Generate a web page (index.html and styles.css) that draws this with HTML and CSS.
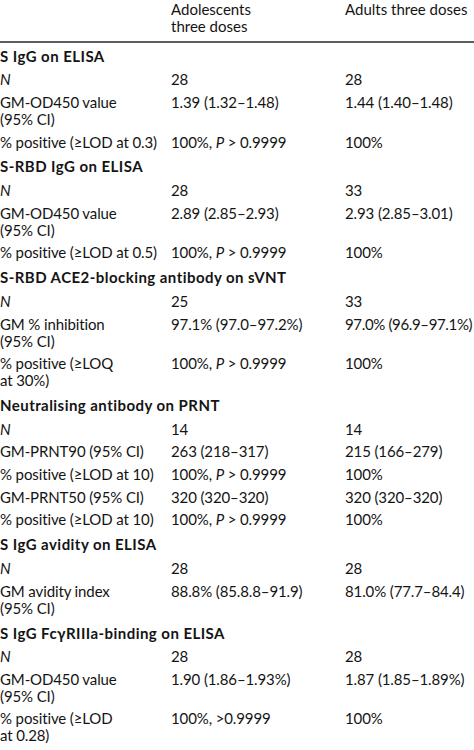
FILE: index.html
```html
<!DOCTYPE html>
<html>
<head>
<meta charset="utf-8">
<link rel="stylesheet" href="styles.css">
</head>
<body>
<div class="table">
  <div class="row head">
    <div class="cell"></div>
    <div class="cell">Adolescents<br>three doses</div>
    <div class="cell">Adults three doses</div>
  </div>

  <div class="sect">S IgG on ELISA</div>
  <div class="row"><div class="cell"><i>N</i></div><div class="cell">28</div><div class="cell">28</div></div>
  <div class="row"><div class="cell">GM-OD450 value<br>(95% CI)</div><div class="cell">1.39 (1.32–1.48)</div><div class="cell">1.44 (1.40–1.48)</div></div>
  <div class="row"><div class="cell">% positive (≥LOD at 0.3)</div><div class="cell">100%, <i>P</i> &gt; 0.9999</div><div class="cell">100%</div></div>

  <div class="sect">S-RBD IgG on ELISA</div>
  <div class="row"><div class="cell"><i>N</i></div><div class="cell">28</div><div class="cell">33</div></div>
  <div class="row"><div class="cell">GM-OD450 value<br>(95% CI)</div><div class="cell">2.89 (2.85–2.93)</div><div class="cell">2.93 (2.85–3.01)</div></div>
  <div class="row"><div class="cell">% positive (≥LOD at 0.5)</div><div class="cell">100%, <i>P</i> &gt; 0.9999</div><div class="cell">100%</div></div>

  <div class="sect">S-RBD ACE2-blocking antibody on sVNT</div>
  <div class="row"><div class="cell"><i>N</i></div><div class="cell">25</div><div class="cell">33</div></div>
  <div class="row"><div class="cell">GM % inhibition<br>(95% CI)</div><div class="cell">97.1% (97.0–97.2%)</div><div class="cell tight">97.0% (96.9–97.1%)</div></div>
  <div class="row"><div class="cell">% positive (≥LOQ<br>at 30%)</div><div class="cell">100%, <i>P</i> &gt; 0.9999</div><div class="cell">100%</div></div>

  <div class="sect">Neutralising antibody on PRNT</div>
  <div class="row"><div class="cell"><i>N</i></div><div class="cell">14</div><div class="cell">14</div></div>
  <div class="row"><div class="cell">GM-PRNT90 (95% CI)</div><div class="cell">263 (218–317)</div><div class="cell">215 (166–279)</div></div>
  <div class="row"><div class="cell">% positive (≥LOD at 10)</div><div class="cell">100%, <i>P</i> &gt; 0.9999</div><div class="cell">100%</div></div>
  <div class="row"><div class="cell">GM-PRNT50 (95% CI)</div><div class="cell">320 (320–320)</div><div class="cell">320 (320–320)</div></div>
  <div class="row"><div class="cell">% positive (≥LOD at 10)</div><div class="cell">100%, <i>P</i> &gt; 0.9999</div><div class="cell">100%</div></div>

  <div class="sect">S IgG avidity on ELISA</div>
  <div class="row"><div class="cell"><i>N</i></div><div class="cell">28</div><div class="cell">28</div></div>
  <div class="row"><div class="cell">GM avidity index<br>(95% CI)</div><div class="cell">88.8% (85.8.8–91.9)</div><div class="cell">81.0% (77.7–84.4)</div></div>

  <div class="sect">S IgG FcγRIIIa-binding on ELISA</div>
  <div class="row"><div class="cell"><i>N</i></div><div class="cell">28</div><div class="cell">28</div></div>
  <div class="row"><div class="cell">GM-OD450 value<br>(95% CI)</div><div class="cell">1.90 (1.86–1.93%)</div><div class="cell">1.87 (1.85–1.89%)</div></div>
  <div class="row"><div class="cell">% positive (≥LOD<br>at 0.28)</div><div class="cell">100%, &gt;0.9999</div><div class="cell">100%</div></div>
</div>
</body>
</html>
```

FILE: styles.css
```css
html, body {
  margin: 0;
  padding: 0;
  background: #ffffff;
}
body {
  font-family: "Lato", "Open Sans", sans-serif;
  font-size: 15px;
  line-height: 17px;
  color: #141414;
  overflow: hidden;
}
.table {
  display: flex;
  flex-direction: column;
  width: 474px;
}
.row {
  display: grid;
  grid-template-columns: 171px 174px 1fr;
  padding: 2.85px 0;
  letter-spacing: -0.12px;
}
.cell {
  white-space: nowrap;
}
.cell.tight {
  letter-spacing: -0.35px;
}
.row.head {
  padding: 0.5px 0 6px;
  border-bottom: 2px solid #5e5e5e;
  letter-spacing: 0;
}
.sect {
  font-weight: bold;
  letter-spacing: 0.45px;
  padding: 5.15px 0 3.65px;
  white-space: nowrap;
}
```
